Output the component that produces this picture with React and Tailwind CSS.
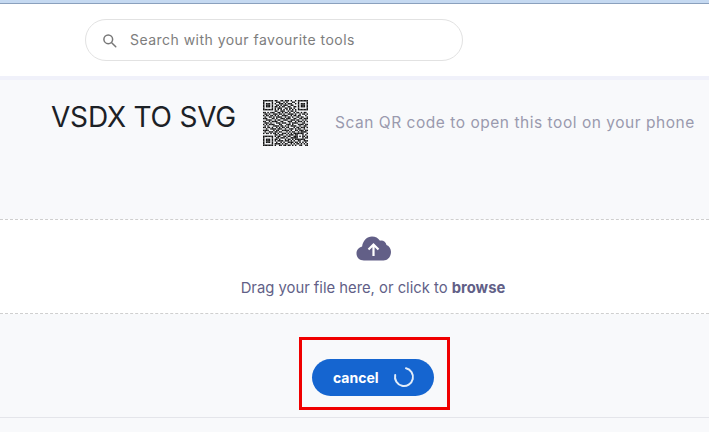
const QR_ROWS = [
  "1111111011001101110100101111111",
  "1000001001110010100011001000001",
  "1011101010011101011100101011101",
  "1011101001101011100110001011101",
  "1011101011010110011001101011101",
  "1000001010111001101101001000001",
  "1111111010101010101010101111111",
  "0000000011001110010110100000000",
  "1101011100110101101001011010110",
  "0110100111011010011110100101101",
  "1011011010100111100101101100010",
  "0100110101111001011010011011001",
  "1110001101001110111001100110111",
  "0011110010110011100111011001010",
  "1100101111001100011100101110101",
  "0111010001110111001011110001100",
  "1010111100011000111010001111011",
  "0101000111101101010111100100110",
  "1101101001010110110001011011101",
  "0010011110111001001110101100100",
  "1111000101100111110100110111011",
  "0100111011011000101011001011110",
  "1011010110100111010101111111001",
  "0000000011011100101110110001010",
  "1111111010110011011001110101101",
  "1000001001101110100111110001011",
  "1011101011010001011010111111100",
  "1011101010111101110101001100111",
  "1011101001001010011110110101010",
  "1000001011110101100101011010101",
  "1111111010011011011010100110011",
];

function QrCode() {
  return (
    <svg width="45" height="46" viewBox="0 0 31 31" preserveAspectRatio="none" className="block">
      {QR_ROWS.map((row, y) =>
        row.split("").map((cell, x) =>
          cell === "1" ? <rect key={`${x}-${y}`} x={x} y={y} width="1" height="1" fill="#111" /> : null
        )
      )}
    </svg>
  );
}

export default function App() {
  return (
    <div className="h-[432px] w-[709px] overflow-hidden bg-white font-['Inter',sans-serif]">
      <div className="h-[4px] border-b border-[#8aa0bd] bg-[#c5d9f1]" />
      <header className="flex h-[72px] items-center pl-[85px]">
        <div className="flex h-[42px] w-[378px] items-center rounded-full border border-[#e2e2e2] bg-white pl-[16px]">
          <svg width="15" height="15" viewBox="0 0 24 24" fill="none" stroke="#777" strokeWidth="2.4" strokeLinecap="round">
            <circle cx="10" cy="10" r="7" />
            <path d="M15.5 15.5 22 22" />
          </svg>
          <span className="mb-[2px] ml-[13px] text-[14px] tracking-[0.47px] text-[#7d7d7d]">Search with your favourite tools</span>
        </div>
      </header>
      <main className="h-[356px] border-t-4 border-[#f0f1fa] bg-[#f8f9fb]">
        <div className="flex h-[139px] items-start">
          <h1 className="ml-[51px] mt-[19px] w-[185px] text-[28px] tracking-[-0.2px] leading-[36px] font-normal whitespace-nowrap text-[#1c2126]">VSDX TO SVG</h1>
          <div className="ml-[27px] mt-[20px]"><QrCode /></div>
          <p className="ml-[27px] mt-[33px] text-[15.5px] tracking-[0.53px] leading-[20px] whitespace-nowrap text-[#9a9aae]">Scan QR code to open this tool on your phone</p>
        </div>
        <section className="flex h-[95px] flex-col items-center border-y border-dashed border-[#cfcfcf] bg-white pl-[37px]">
          <svg className="mt-[16px]" width="35" height="25" viewBox="0 0 35 25">
            <path fill="#625f87" d="M8 24.5C3.5 24.5.5 21.5.5 17.5c0-3.5 2.3-6.2 5.6-7C7 4.5 11 .5 16 .5c3.4 0 6.2 1.6 8 4.2 3-.7 6 1.200 6.500 4.300 2.800 1 4.500 3.800 4.500 7 0 4.500-3.200 8.500-7.500 8.500Z" />
            <path fill="none" stroke="#fff" strokeWidth="2.2" d="M17.500 20V9M12.500 13.500l5-5 5 5" />
          </svg>
          <p className="mt-[17px] text-[14.800px] leading-[20px] text-[#625f87]">
            Drag your file here, or click to <strong className="font-bold">browse</strong>
          </p>
        </section>
        <div className="flex h-[104px] items-start justify-center border-b border-[#e4e5ea] pt-[23px] pl-[40px]">
          <div className="border-[3px] border-[#f00000] pt-[19px] pr-[13px] pb-[11px] pl-[10px]">
            <button className="flex h-[37px] w-[122px] items-center rounded-full bg-[#1565d0] pb-[1px] pl-[21px] text-[14px] font-bold text-white">
              cancel
              <svg className="ml-[14px]" width="22" height="22" viewBox="0 0 22 22" fill="none" stroke="#e3edf9" strokeWidth="2" strokeLinecap="round">
                <path d="M13 2.200A9 9 0 1 1 2.200 9" />
              </svg>
            </button>
          </div>
        </div>
      </main>
    </div>
  );
}
